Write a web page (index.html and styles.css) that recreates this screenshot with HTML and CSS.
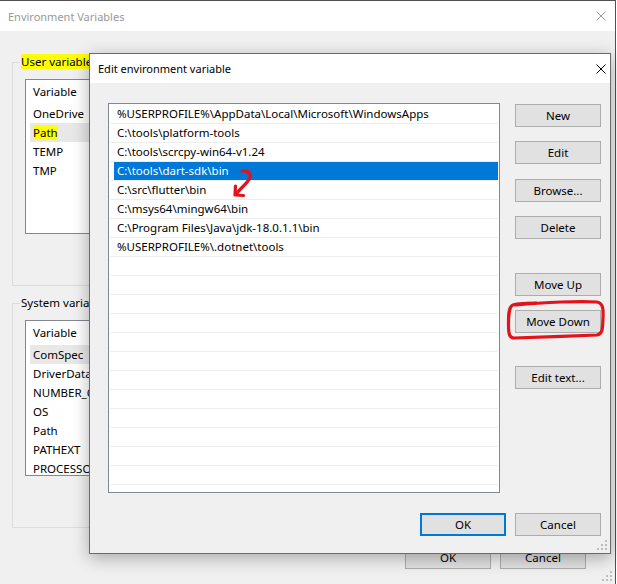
FILE: index.html
```html
<!DOCTYPE html>
<html>
<head>
<meta charset="utf-8">
<title>Edit environment variable</title>
<link rel="stylesheet" href="styles.css">
</head>
<body>
<div class="desk">
  <div class="win outer">
    <div class="tbar">
      <span class="ttl">Environment Variables</span>
      <svg class="xic" width="10" height="10" viewBox="0 0 10 10"><path d="M0.5 0.5L9.5 9.5M9.5 0.5L0.5 9.5" stroke="#9a9a9a" stroke-width="1"/></svg>
    </div>
    <div class="obody">
      <fieldset class="grp">
        <legend><span class="hl">User variables</span></legend>
        <div class="vlist">
          <div class="vhead">Variable</div>
          <div class="vrow">OneDrive</div>
          <div class="vrow vsel"><span class="hl">Path</span></div>
          <div class="vrow">TEMP</div>
          <div class="vrow">TMP</div>
        </div>
      </fieldset>
      <fieldset class="grp grp-sys">
        <legend>System variables</legend>
        <div class="vlist vlist-sys">
          <div class="vhead">Variable</div>
          <div class="vrow vsel">ComSpec</div>
          <div class="vrow">DriverData</div>
          <div class="vrow">NUMBER_OF_PROCESSORS</div>
          <div class="vrow">OS</div>
          <div class="vrow">Path</div>
          <div class="vrow">PATHEXT</div>
          <div class="vrow">PROCESSOR_ARCHITECTURE</div>
        </div>
      </fieldset>
      <div class="ofoot">
        <button class="btn">OK</button>
        <button class="btn">Cancel</button>
      </div>
    </div>
    <svg class="grip" width="10" height="10" viewBox="0 0 10 10"><g fill="#bdbdbd"><rect x="8" y="0" width="2" height="2"/><rect x="4" y="4" width="2" height="2"/><rect x="8" y="4" width="2" height="2"/><rect x="0" y="8" width="2" height="2"/><rect x="4" y="8" width="2" height="2"/><rect x="8" y="8" width="2" height="2"/></g></svg>
  </div>

  <div class="win dlg">
    <div class="tbar dtbar">
      <span class="ttl dttl">Edit environment variable</span>
      <svg class="xic" width="10" height="10" viewBox="0 0 10 10"><path d="M0.5 0.5L9.5 9.5M9.5 0.5L0.5 9.5" stroke="#000" stroke-width="1"/></svg>
    </div>
    <div class="dbody">
      <div class="plist">
        <div class="prow"><span class="pcell">%USERPROFILE%\AppData\Local\Microsoft\WindowsApps</span></div>
        <div class="prow"><span class="pcell">C:\tools\platform-tools</span></div>
        <div class="prow"><span class="pcell">C:\tools\scrcpy-win64-v1.24</span></div>
        <div class="prow psel"><span class="pcell">C:\tools\dart-sdk\bin</span></div>
        <div class="prow"><span class="pcell">C:\src\flutter\bin</span></div>
        <div class="prow"><span class="pcell">C:\msys64\mingw64\bin</span></div>
        <div class="prow"><span class="pcell">C:\Program Files\Java\jdk-18.0.1.1\bin</span></div>
        <div class="prow"><span class="pcell">%USERPROFILE%\.dotnet\tools</span></div>
        <div class="prow"><span class="pcell"></span></div>
        <div class="prow"><span class="pcell"></span></div>
        <div class="prow"><span class="pcell"></span></div>
        <div class="prow"><span class="pcell"></span></div>
        <div class="prow"><span class="pcell"></span></div>
        <div class="prow"><span class="pcell"></span></div>
        <div class="prow"><span class="pcell"></span></div>
        <div class="prow"><span class="pcell"></span></div>
        <div class="prow"><span class="pcell"></span></div>
        <div class="prow"><span class="pcell"></span></div>
        <div class="prow"><span class="pcell"></span></div>
        <div class="prow"><span class="pcell"></span></div>
        <div class="prow"><span class="pcell"></span></div>
      </div>
      <div class="side">
        <button class="btn">New</button>
        <button class="btn">Edit</button>
        <button class="btn b-browse">Browse...</button>
        <button class="btn">Delete</button>
        <button class="btn b-up">Move Up</button>
        <button class="btn">Move Down</button>
        <button class="btn b-text">Edit text...</button>
      </div>
      <div class="dfoot">
        <button class="btn btn-def">OK</button>
        <button class="btn">Cancel</button>
      </div>
    </div>
    <svg class="grip" width="10" height="10" viewBox="0 0 10 10"><g fill="#bdbdbd"><rect x="8" y="0" width="2" height="2"/><rect x="4" y="4" width="2" height="2"/><rect x="8" y="4" width="2" height="2"/><rect x="0" y="8" width="2" height="2"/><rect x="4" y="8" width="2" height="2"/><rect x="8" y="8" width="2" height="2"/></g></svg>
  </div>

  <svg class="ink" width="617" height="584" viewBox="0 0 617 584">
    <g fill="none" stroke="#e3121b" stroke-width="3.2" stroke-linecap="round" stroke-linejoin="round">
      <path d="M242 171 C249 170 253 175 248 181 C245 185 240 189 237 193"/>
      <path d="M235.5 186 L235 195 L243.5 195.5"/>
      <path d="M516 305 C545 302 582 301 597 302 C603 303 603.5 309 603 318 C602.5 328 603 334 597 335 C570 336 540 337 514 338 C509.5 338 508.5 334 508.5 325 C508.5 315 508.5 308 512 305.5 C516 303 526 303 536 303"/>
    </g>
  </svg>
</div>
</body>
</html>
```

FILE: styles.css
```css
html, body {
  margin: 0;
  padding: 0;
}

body {
  width: 617px;
  height: 584px;
  overflow: hidden;
  background: #ffffff;
  font-family: "Noto Sans", "Open Sans", sans-serif;
  font-size: 11.5px;
  color: #000000;
}

.desk {
  position: relative;
  width: 617px;
  height: 584px;
  overflow: hidden;
}

.win {
  position: absolute;
  box-sizing: border-box;
  background: #f0f0f0;
}

.outer {
  left: 0;
  top: 0;
  width: 616px;
  height: 584px;
  border-top: 1px solid #505050;
  border-right: 1px solid #505050;
}

.tbar {
  height: 30px;
  background: #ffffff;
  display: flex;
  align-items: center;
  justify-content: space-between;
  padding: 0 9px 0 8px;
}

.ttl {
  font-size: 11px;
  color: #999999;
}

.xic {
  display: block;
}

.obody {
  padding: 23px 0 0 12px;
}

.grp {
  margin: 0 12px 0 0;
  padding: 0 0 51px 12px;
  border: 1px solid #dcdcdc;
  min-width: 0;
}

.grp legend {
  padding: 0 1px;
  margin-left: -5px;
  line-height: 16px;
}

.grp-sys {
  margin-top: 9px;
}

.hl {
  background: #ffff00;
}

.vlist {
  margin-top: 9px;
  height: 155px;
  box-sizing: border-box;
  border: 1px solid #828790;
  background: #ffffff;
  overflow: hidden;
}

.vlist-sys {
  height: 156px;
}

.vhead {
  height: 24px;
  line-height: 24px;
  padding-left: 7px;
}

.vrow {
  height: 19px;
  line-height: 19px;
  margin-left: 4px;
  padding-left: 3px;
  white-space: nowrap;
}

.vsel {
  background: #e8e8e8;
}

.ofoot {
  display: flex;
  justify-content: flex-end;
  gap: 9px;
  margin-top: 18px;
  padding-right: 29px;
}

.btn {
  width: 86px;
  height: 23px;
  box-sizing: border-box;
  background: #e1e1e1;
  border: 1px solid #adadad;
  font: inherit;
  color: #000000;
  padding: 0;
  margin: 0;
}

.btn-def {
  border: 2px solid #0078d7;
}

.grip {
  position: absolute;
  right: 3px;
  bottom: 3px;
}

.dlg {
  left: 89px;
  top: 53px;
  width: 522px;
  height: 501px;
  border: 1px solid #6a6a6a;
  box-shadow: 0 4px 16px rgba(0, 0, 0, 0.3);
}

.dtbar {
  height: 29px;
  padding: 0 4px 0 8px;
}

.dttl {
  color: #000000;
}

.dbody {
  display: grid;
  grid-template-columns: 392px 86px;
  column-gap: 15px;
  padding: 20px 0 0 18px;
  align-items: start;
}

.plist {
  height: 390px;
  box-sizing: border-box;
  border: 1px solid #828790;
  background: #ffffff;
  overflow: hidden;
  padding-top: 1px;
}

.prow {
  height: 19px;
  box-sizing: border-box;
  border-bottom: 1px solid #ededed;
  margin: 0 1px;
}

.pcell {
  display: block;
  height: 18px;
  line-height: 18px;
  margin-left: 4px;
  padding-left: 3px;
  white-space: nowrap;
}

.psel .pcell {
  background: #0078d7;
  color: #ffffff;
}

.side {
  display: flex;
  flex-direction: column;
  gap: 14px;
  margin-top: 1px;
}

.b-browse {
  margin-top: 1px;
}

.b-up {
  margin-top: 20px;
}

.b-text {
  margin-top: 19px;
}

.dfoot {
  grid-column: 1 / -1;
  display: flex;
  justify-content: flex-end;
  gap: 9px;
  margin-top: 20px;
}

.ink {
  position: absolute;
  left: 0;
  top: 0;
  pointer-events: none;
}
```
